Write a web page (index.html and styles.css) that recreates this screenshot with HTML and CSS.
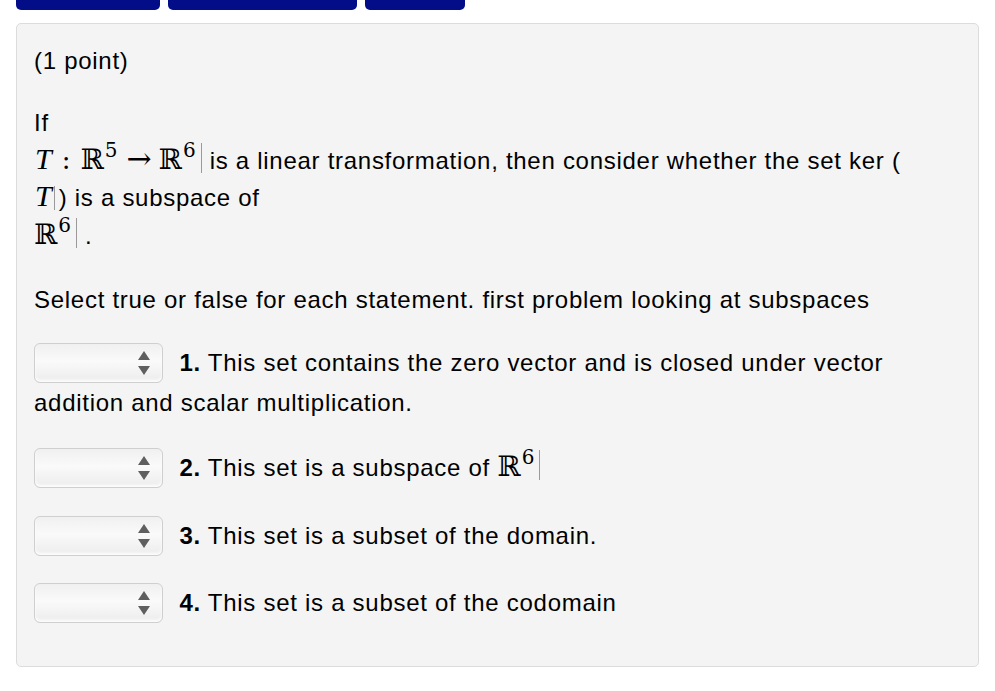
FILE: index.html
```html
<!DOCTYPE html>
<html lang="en">
  <head>
    <meta charset="UTF-8" />
    <title>Problem</title>
    <link rel="stylesheet" href="styles.css">
  </head>
  <body>
    <div class="tabs">
      <span class="tab tab-1"></span>
      <span class="tab tab-2"></span>
      <span class="tab tab-3"></span>
    </div>
    <div class="problem">
      <p class="points">(1 point)</p>
      <p class="statement">
        If<br />
        <span class="math"><i>T</i><span class="op">:</span>ℝ<sup>5</sup><span class="op arrow">→</span>ℝ<sup>6</sup></span><span class="bar"></span>is a linear transformation, then consider whether the set ker (<br />
        <span class="math"><i>T</i></span><span class="bar small"></span>) is a subspace of<br />
        <span class="math">ℝ<sup>6</sup></span><span class="bar"></span>.
      </p>
      <p class="intro">Select true or false for each statement. first problem looking at subspaces</p>

      <div class="item item-1">
        <span class="select">
          <svg class="arrows" width="12" height="24" viewBox="0 0 12 24"><polygon points="6,0 12,9 0,9" /><polygon points="0,15 12,15 6,24" /></svg>
        </span>
        <b>1.</b> This set contains the zero vector and is closed under vector addition and scalar multiplication.
      </div>
      <div class="item item-2">
        <span class="select">
          <svg class="arrows" width="12" height="24" viewBox="0 0 12 24"><polygon points="6,0 12,9 0,9" /><polygon points="0,15 12,15 6,24" /></svg>
        </span>
        <b>2.</b> This set is a subspace of <span class="math">ℝ<sup>6</sup></span><span class="bar"></span>
      </div>
      <div class="item item-3">
        <span class="select">
          <svg class="arrows" width="12" height="24" viewBox="0 0 12 24"><polygon points="6,0 12,9 0,9" /><polygon points="0,15 12,15 6,24" /></svg>
        </span>
        <b>3.</b> This set is a subset of the domain.
      </div>
      <div class="item item-4">
        <span class="select">
          <svg class="arrows" width="12" height="24" viewBox="0 0 12 24"><polygon points="6,0 12,9 0,9" /><polygon points="0,15 12,15 6,24" /></svg>
        </span>
        <b>4.</b> This set is a subset of the codomain
      </div>
    </div>
  </body>
</html>
```

FILE: styles.css
```css
body {
  margin: 0;
  padding: 0 16px;
  background: #fff;
  font-family: "Liberation Sans", Arial, sans-serif;
  color: #000;
}
.tabs {
  display: flex;
  gap: 8px;
  height: 10px;
  margin-bottom: 13px;
}
.tab {
  display: block;
  height: 10px;
  background-color: #020d87;
  border-radius: 0 0 5px 5px;
}
.tab-1 {
  width: 144px;
}
.tab-2 {
  width: 189px;
}
.tab-3 {
  width: 100px;
}
.problem {
  width: 963px;
  height: 644px;
  box-sizing: border-box;
  background-color: #f4f4f4;
  border: 1px solid #dcdcdc;
  border-radius: 5px;
  padding: 22px 17px;
  font-size: 24px;
  letter-spacing: 0.72px;
}
.problem p {
  margin: 0;
}
.points {
  line-height: 30px;
  margin-bottom: 28px !important;
}
.statement {
  line-height: 37.5px;
}
.math {
  font-family: "DejaVu Serif", "Liberation Serif", serif;
  font-size: 28px;
  letter-spacing: 0;
  line-height: 0;
}
.math i {
  font-family: "Liberation Serif", serif;
  font-size: 30px;
  padding-left: 1px;
}
.math sup {
  font-size: 20px;
  vertical-align: 12px;
  line-height: 0;
  margin-left: 1px;
}
.op {
  font-size: 26px;
  margin: 0 10px;
}
.op.arrow {
  font-size: 30px;
  margin: 0 7px 0 9px;
}
.bar {
  display: inline-block;
  width: 1px;
  height: 30px;
  background: #9a9a9a;
  vertical-align: -4px;
  margin: 0 8px 0 5px;
}
.bar.small {
  height: 24px;
  margin: 0 4px 0 2px;
}
.intro {
  margin-top: 31px !important;
  line-height: 30px;
}
.item {
  line-height: 40px;
}
.item-1 {
  margin-top: 28px;
}
.item-2 {
  margin-top: 25px;
}
.item-3 {
  margin-top: 28px;
}
.item-4 {
  margin-top: 27px;
}
.select {
  display: inline-block;
  position: relative;
  width: 129px;
  height: 40px;
  box-sizing: border-box;
  vertical-align: top;
  margin-right: 9px;
  border: 1px solid #cfcfcf;
  border-radius: 6px;
  background: linear-gradient(#f0f0f0, #fafafa 45%, #ececec);
  box-shadow: inset 0 -2px 3px rgba(255, 255, 255, 0.9);
}
.arrows {
  position: absolute;
  right: 12px;
  top: 7px;
  fill: #5f5f5f;
}
```
